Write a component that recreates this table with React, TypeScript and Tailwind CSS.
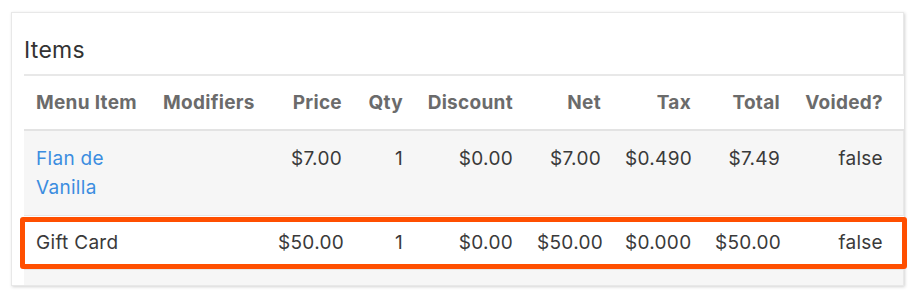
const columns = [
  { key: "item", label: "Menu Item", width: 127, align: "left" },
  { key: "modifiers", label: "Modifiers", width: 115, align: "left" },
  { key: "price", label: "Price", width: 88, align: "right" },
  { key: "qty", label: "Qty", width: 61, align: "right" },
  { key: "discount", label: "Discount", width: 110, align: "right" },
  { key: "net", label: "Net", width: 88, align: "right" },
  { key: "tax", label: "Tax", width: 90, align: "right" },
  { key: "total", label: "Total", width: 89, align: "right" },
  { key: "voided", label: "Voided?", width: 112, align: "right" },
];

const items = [
  {
    item: "Flan de Vanilla",
    link: true,
    modifiers: "",
    price: "$7.00",
    qty: "1",
    discount: "$0.00",
    net: "$7.00",
    tax: "$0.490",
    total: "$7.49",
    voided: "false",
    highlight: false,
  },
  {
    item: "Gift Card",
    link: false,
    modifiers: "",
    price: "$50.00",
    qty: "1",
    discount: "$0.00",
    net: "$50.00",
    tax: "$0.000",
    total: "$50.00",
    voided: "false",
    highlight: true,
  },
];

export default function App() {
  return (
    <div
      className="min-h-[295px] bg-white pl-[11px] pt-3"
      style={{ fontFamily: "Inter, 'Liberation Sans', sans-serif" }}
    >
      <div className="w-[893px] border border-[#e8e8e8] bg-white pl-3 shadow-[1px_1px_3px_rgba(0,0,0,0.18)]">
        <h2 className="border-b-2 border-[#e8e8e8] pb-[9px] pt-[22px] text-[23px] leading-[30px] tracking-[0.3px] text-[#333]">
          Items
        </h2>
        <div className="bg-[#f6f6f6] pb-[15px]">
          <table className="w-[880px] table-fixed border-collapse text-[19px] leading-[29px] tracking-[0.3px]">
            <colgroup>
              {columns.map((c) => (
                <col key={c.key} style={{ width: c.width }} />
              ))}
            </colgroup>
            <thead>
              <tr className="border-b-2 border-[#e3e3e3] bg-white">
                {columns.map((c, i) => (
                  <th
                    key={c.key}
                    className={`whitespace-nowrap py-3 pl-3 font-bold text-[#6b6b6b] ${
                      c.align === "right" ? "text-right" : "text-left"
                    } ${i === columns.length - 1 ? "pr-[21px]" : "pr-3"}`}
                  >
                    {c.label}
                  </th>
                ))}
              </tr>
            </thead>
            <tbody>
              {items.map((row) => (
                <tr
                  key={row.item}
                  className={`border-b border-[#e6e6e6] ${
                    row.highlight ? "bg-white" : ""
                  }`}
                >
                  {columns.map((c, i) => {
                    const value = row[c.key as keyof typeof row] as string;
                    return (
                      <td
                        key={c.key}
                        className={`relative pl-3 align-top text-[#3a3a3a] ${
                          row.highlight ? "py-3" : "py-[13px]"
                        } ${c.align === "right" ? "text-right" : "text-left"} ${
                          i === columns.length - 1 ? "pr-[21px]" : "pr-3"
                        }`}
                      >
                        {c.key === "item" && row.link ? (
                          <a href="#" className="text-[#3b8de0]">
                            {value}
                          </a>
                        ) : (
                          value
                        )}
                        {row.highlight && i === 0 && (
                          <span className="pointer-events-none absolute -left-1 top-[1px] bottom-0 w-[887px] rounded-[3px] border-[5px] border-[#ff4f00]" />
                        )}
                      </td>
                    );
                  })}
                </tr>
              ))}
            </tbody>
          </table>
        </div>
      </div>
    </div>
  );
}
